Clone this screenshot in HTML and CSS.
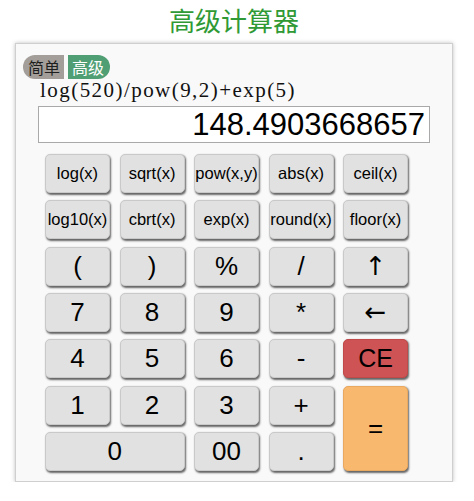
FILE: index.html
```html
<!DOCTYPE html>
<html lang="zh">
<head>
<meta charset="utf-8">
<title>高级计算器</title>
<link rel="stylesheet" href="styles.css">
</head>
<body>
<div class="page">
  <h1 class="title">高级计算器</h1>
  <div class="calc">
    <div class="tabs">
      <span class="tab tab-simple">简单</span><span class="tab tab-adv">高级</span>
    </div>
    <div class="expr">log(520)/pow(9,2)+exp(5)</div>
    <div class="display">148.4903668657</div>
    <div class="keys">
      <button class="key fn">log(x)</button>
      <button class="key fn">sqrt(x)</button>
      <button class="key fn">pow(x,y)</button>
      <button class="key fn">abs(x)</button>
      <button class="key fn">ceil(x)</button>

      <button class="key fn">log10(x)</button>
      <button class="key fn">cbrt(x)</button>
      <button class="key fn">exp(x)</button>
      <button class="key fn">round(x)</button>
      <button class="key fn">floor(x)</button>

      <button class="key big">(</button>
      <button class="key big">)</button>
      <button class="key big">%</button>
      <button class="key big">/</button>
      <button class="key big arrow">↑</button>

      <button class="key big">7</button>
      <button class="key big">8</button>
      <button class="key big">9</button>
      <button class="key big">*</button>
      <button class="key big arrow">←</button>

      <button class="key big">4</button>
      <button class="key big">5</button>
      <button class="key big">6</button>
      <button class="key big">-</button>
      <button class="key big ce">CE</button>

      <button class="key big">1</button>
      <button class="key big">2</button>
      <button class="key big">3</button>
      <button class="key big">+</button>
      <button class="key big eq">=</button>

      <button class="key big zero">0</button>
      <button class="key big">00</button>
      <button class="key big">.</button>
    </div>
  </div>
</div>
</body>
</html>
```

FILE: styles.css
```css
html, body {
  margin: 0;
  padding: 0;
  background: #ffffff;
}

.page {
  width: 438px;
  margin-left: 15px;
  font-family: "Liberation Sans", Arial, sans-serif;
}

.title {
  margin: 0;
  height: 43px;
  padding-top: 4px;
  box-sizing: border-box;
  text-align: center;
  font-family: "Noto Sans CJK SC", sans-serif;
  font-weight: normal;
  font-size: 26px;
  line-height: 32px;
  color: #2f9a35;
}

.calc {
  box-sizing: border-box;
  width: 438px;
  height: 439px;
  border: 1px solid #cfcfcf;
  background: #f9f9f9;
  box-shadow: 0 0 4px rgba(0, 0, 0, 0.25);
  padding: 11px 0 0 7px;
}

.tabs {
  display: flex;
  height: 24px;
}

.tab {
  display: block;
  height: 24px;
  line-height: 24px;
  font-family: "Noto Sans CJK SC", sans-serif;
  font-size: 16px;
  padding: 0 4px;
}

.tab-simple {
  background: #a39e99;
  color: #1e1e1e;
  border-radius: 12px 0 0 12px;
  padding-left: 5px;
}

.tab-adv {
  margin-left: 4px;
  background: #4f9e74;
  color: #ffffff;
  border-radius: 0 12px 12px 0;
  padding-right: 6px;
}

.expr {
  margin-left: 17px;
  height: 27px;
  font-family: "Liberation Serif", "Times New Roman", serif;
  font-size: 21px;
  letter-spacing: 1.45px;
  line-height: 23px;
  color: #111;
}

.display {
  box-sizing: border-box;
  margin-left: 15px;
  width: 392px;
  height: 37px;
  border: 1px solid #a9a9a9;
  background: #ffffff;
  text-align: right;
  padding-right: 4px;
  font-size: 31px;
  line-height: 35px;
  color: #000;
}

.keys {
  margin-top: 11px;
  margin-left: 22px;
  display: grid;
  grid-template-columns: repeat(5, 65px);
  grid-template-rows: repeat(7, 39px);
  column-gap: 9.5px;
  row-gap: 7.33px;
}

.key {
  margin: 0;
  padding: 0;
  border: 1px solid #c9c9c9;
  border-radius: 5px;
  background: #e1e1e1;
  box-shadow: 1px 1.5px 2px rgba(0, 0, 0, 0.6);
  color: #000;
  font-family: "Liberation Sans", Arial, sans-serif;
  text-align: center;
}

.fn {
  font-size: 16.5px;
}

.big {
  font-size: 26px;
}

.arrow {
  font-family: "DejaVu Sans", sans-serif;
  font-size: 26px;
}

.ce {
  background: #cd5354;
  border-color: #c04a4a;
  font-size: 25px;
}

.eq {
  grid-column: 5;
  grid-row: 6 / span 2;
  background: #f8b96f;
  border-color: #eaa960;
}

.zero {
  grid-column: 1 / span 2;
}
```
